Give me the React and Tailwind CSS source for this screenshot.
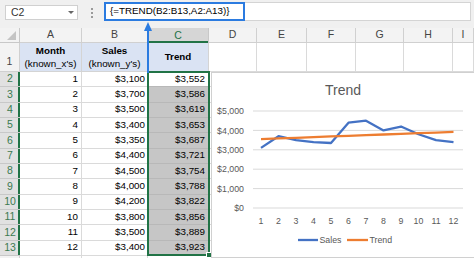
import React from "react";

const sales = [3100, 3700, 3500, 3400, 3350, 4400, 4500, 4000, 4200, 3800, 3500, 3400];
const trend = [3552, 3586, 3619, 3653, 3687, 3721, 3754, 3788, 3822, 3856, 3889, 3923];
const fmt = (v) => "$" + v.toLocaleString("en-US");

const cols = ["A", "B", "C", "D", "E", "F", "G", "H", "I"];

function Chart() {
  const px = (i) => 49 + i * 17.5;
  const py = (v) => 135 - v * 0.0194;
  const sPts = sales.map((v, i) => `${px(i)},${py(v)}`).join(" ");
  const tPts = trend.map((v, i) => `${px(i)},${py(v)}`).join(" ");
  const ticks = [5000, 4000, 3000, 2000, 1000, 0];
  return (
    <svg width="270" height="186" className="block">
      <text x="131" y="22" textAnchor="middle" fontSize="14" fill="#595959" fontFamily="Liberation Sans, sans-serif">Trend</text>
      {ticks.map((t) => (
        <g key={t}>
          <line x1="41" x2="251" y1={py(t)} y2={py(t)} stroke="#d9d9d9" strokeWidth="1" />
          <text x="32" y={py(t) + 3.2} textAnchor="end" fontSize="8.8" fill="#595959" fontFamily="Liberation Sans, sans-serif">{fmt(t)}</text>
        </g>
      ))}
      {sales.map((_, i) => (
        <text key={i} x={px(i)} y="150.5" textAnchor="middle" fontSize="8.8" fill="#595959" fontFamily="Liberation Sans, sans-serif">{i + 1}</text>
      ))}
      <polyline points={sPts} fill="none" stroke="#4472c4" strokeWidth="2.3" strokeLinejoin="round" />
      <polyline points={tPts} fill="none" stroke="#ed7d31" strokeWidth="2.3" strokeLinejoin="round" />
      <line x1="86" x2="106" y1="167" y2="167" stroke="#4472c4" strokeWidth="2.3" />
      <text x="107.5" y="170.2" fontSize="8.8" fill="#595959" fontFamily="Liberation Sans, sans-serif">Sales</text>
      <line x1="135" x2="156" y1="167" y2="167" stroke="#ed7d31" strokeWidth="2.3" />
      <text x="157.5" y="170.2" fontSize="8.8" fill="#595959" fontFamily="Liberation Sans, sans-serif">Trend</text>
    </svg>
  );
}

export default function App() {
  const rows = [];
  rows.push(
    <div key="corner" className="bg-[#f3f3f3] border-r border-b border-[#c8c8c8] flex items-end justify-end pr-[3px] pb-[2px]">
      <div className="w-0 h-0 border-l-[9px] border-l-transparent border-b-[9px] border-b-[#c4c4c4]" />
    </div>
  );
  cols.forEach((c) => {
    rows.push(
      c === "C" ? (
        <div key={"h" + c} className="bg-[#d6d6d6] text-[#217346] border-r border-[#c8c8c8] shadow-[inset_0_-2px_0_#217346] flex items-center justify-center text-[10.5px]">{c}</div>
      ) : (
        <div key={"h" + c} className="bg-[#f3f3f3] text-[#444] border-r border-b border-[#d0d0d0] flex items-center justify-center text-[10.5px]">{c}</div>
      )
    );
  });
  rows.push(
    <div key="r1" className="bg-[#f3f3f3] text-[#444] border-r border-b border-[#d0d0d0] flex items-end justify-center pb-[1px] text-[10.5px]">1</div>
  );
  rows.push(
    <div key="r1a" className="bg-[#dae3f3] border-r border-b border-[#d4d4d4] flex flex-col items-center justify-center text-[9.8px] leading-[13.5px] text-black">
      <span className="font-bold">Month</span>
      <span>(known_x's)</span>
    </div>
  );
  rows.push(
    <div key="r1b" className="bg-[#dae3f3] border-r border-b border-[#d4d4d4] flex flex-col items-center justify-center text-[9.8px] leading-[13.5px] text-black">
      <span className="font-bold">Sales</span>
      <span>(known_y's)</span>
    </div>
  );
  rows.push(
    <div key="r1c" className="bg-[#dae3f3] border-r border-b border-[#d4d4d4] flex items-center justify-center text-[9.8px] font-bold text-black">Trend</div>
  );
  for (let j = 3; j < 9; j++) {
    rows.push(<div key={"r1x" + j} className="bg-white border-r border-b border-[#dadada]" />);
  }
  for (let i = 0; i < 12; i++) {
    rows.push(
      <div key={"rh" + i} className="bg-[#e1e1e1] text-[#3b7a50] border-b border-[#c8c8c8] shadow-[inset_-2px_0_0_#217346] flex items-center justify-center text-[10.5px]">{i + 2}</div>
    );
    rows.push(
      <div key={"ra" + i} className="bg-white border-r border-b border-[#dadada] flex items-center justify-end pr-[3px] text-[9.8px] text-black">{i + 1}</div>
    );
    rows.push(
      <div key={"rb" + i} className="bg-white border-r border-b border-[#dadada] flex items-center justify-end pr-[2px] text-[9.8px] text-black">{fmt(sales[i])}</div>
    );
    rows.push(
      <div key={"rc" + i} className={(i === 0 ? "bg-white" : "bg-[#c6c6c6]") + " border-r border-b border-[#b8b8b8] flex items-center justify-end pr-[3px] text-[9.8px] text-black"}>{fmt(trend[i])}</div>
    );
    for (let j = 3; j < 9; j++) {
      rows.push(<div key={"rx" + i + "-" + j} className="bg-white border-r border-b border-[#dadada]" />);
    }
  }
  rows.push(<div key="r14" className="bg-[#f3f3f3] border-r border-[#d0d0d0]" />);
  for (let j = 0; j < 9; j++) {
    rows.push(<div key={"r14x" + j} className="bg-white border-r border-[#dadada]" />);
  }

  return (
    <div className="relative w-[474px] h-[258px] overflow-hidden bg-white font-['Liberation_Sans',Arial,sans-serif]">
      <div className="h-[28px] bg-[#f0f0f0] flex items-start pt-[2px]">
        <div className="ml-[5px] mt-[3px] w-[73px] h-[15px] bg-white border border-[#d0d0d0] flex items-center justify-between pl-[5px] pr-[3px]">
          <span className="text-[10.5px] text-[#333]">C2</span>
          <div className="w-0 h-0 border-l-[3px] border-r-[3px] border-t-[3px] border-l-transparent border-r-transparent border-t-[#666]" />
        </div>
        <div className="ml-[13px] mt-[6px] flex flex-col gap-[2px]">
          <div className="w-[2px] h-[2px] bg-[#9a9a9a]" />
          <div className="w-[2px] h-[2px] bg-[#9a9a9a]" />
          <div className="w-[2px] h-[2px] bg-[#9a9a9a]" />
        </div>
        <div className="ml-[11px] w-[141px] h-[19px] bg-white border-2 border-[#2b7be0] flex items-center pl-[4px]">
          <span className="text-[9.8px] text-black whitespace-nowrap">{"{=TREND(B2:B13,A2:A13)}"}</span>
        </div>
        <div className="w-[226px] h-[19px] bg-white border-y border-r border-[#d4d4d4]" />
      </div>

      <div className="grid grid-cols-[20px_62px_66px_61px_48px_50px_49px_48px_49px_21px] grid-rows-[15px_29px_repeat(12,15.33px)_15px]">
        {rows}
      </div>

      <div className="absolute left-[147px] top-[71px] w-[63px] h-[185px] border-2 border-[#217346] pointer-events-none" />
      <div className="absolute left-[206px] top-[252px] w-[6px] h-[6px] bg-[#217346] border border-white" />

      <svg className="absolute left-[143px] top-[22px]" width="10" height="51">
        <line x1="5" y1="6" x2="5" y2="51" stroke="#2b7be0" strokeWidth="2" />
        <polygon points="5,0 1,9 9,9" fill="#2b7be0" />
      </svg>

      <div className="absolute left-[211px] top-[72px] w-[270px] h-[186px] bg-white border border-[#d0d0d0]">
        <Chart />
      </div>
    </div>
  );
}
